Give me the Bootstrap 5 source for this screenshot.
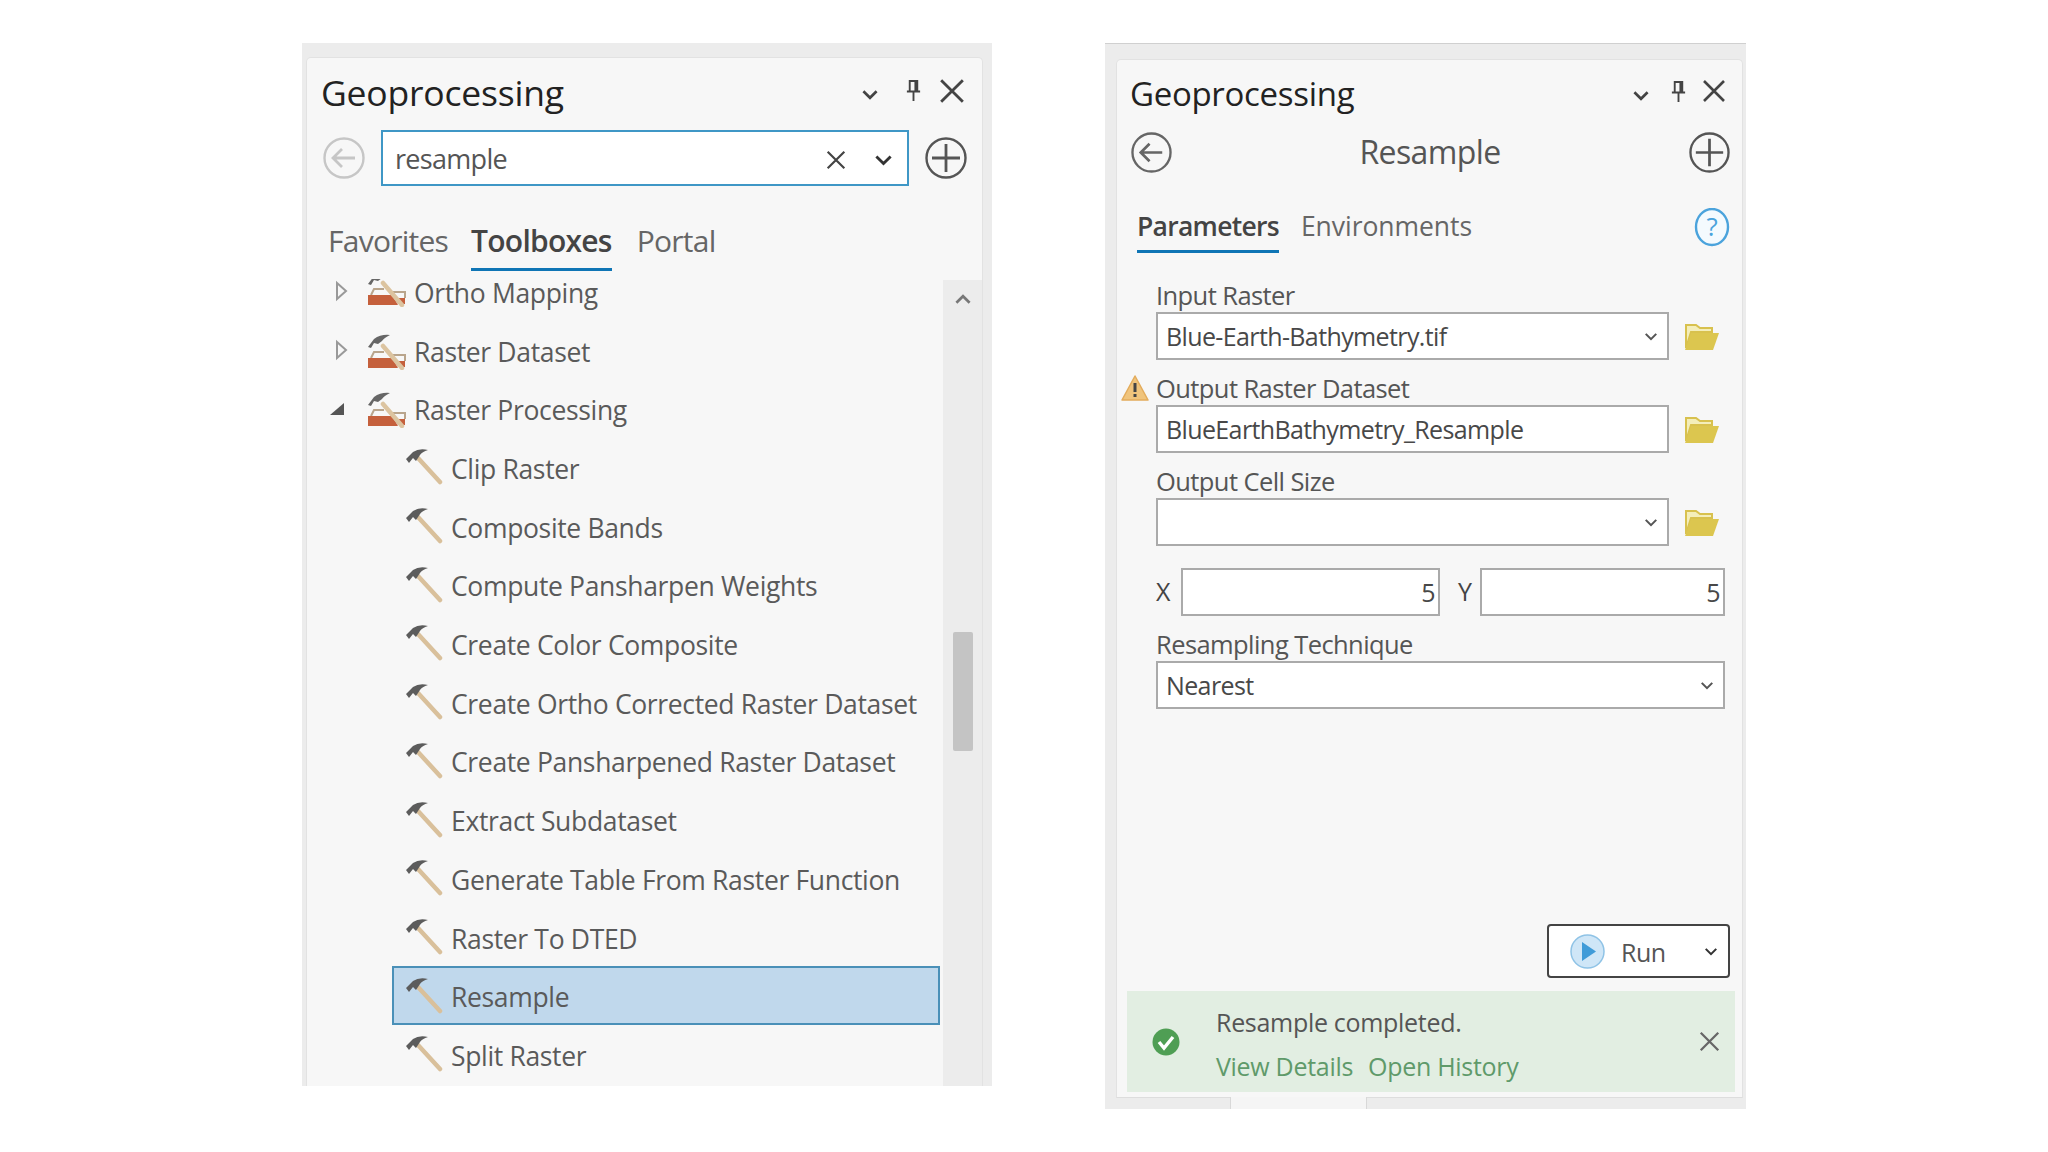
<!DOCTYPE html>
<html lang="en"><head><meta charset="utf-8"><title>Geoprocessing</title>
<link href="https://cdn.jsdelivr.net/npm/bootstrap@5.3.0/dist/css/bootstrap.min.css" rel="stylesheet">
<style>
body{background:#fff;font-family:"Open Sans","Noto Sans",sans-serif;color:#555;overflow:hidden}
.stage{padding:43px 0 0 302px;gap:113px;height:1152px}
.shell-a{width:690px;height:1043px;background:#ececec;padding:14px 9px 0 4px;overflow:hidden}
.shell-b{width:641px;height:1066px;background:#ececec;padding:15px 3px 11px 11px;position:relative;border-top:1px solid #d0d0d0}
.pane{background:#f7f7f7;height:100%;border:1px solid #e2e2e2;border-bottom:0;border-radius:5px 5px 0 0;overflow:hidden}
.pane-b{border-bottom:1px solid #ddd}
.notch{position:absolute;left:125px;bottom:0;width:137px;height:12px;background:#f5f5f5;border:1px solid #d8d8d8;border-width:0 1px}
.head-a{height:72px;padding:0 17px 3px 14px}
.head-b{height:66px;padding:0 16px 0 13px}
.ptitle{font-size:35.5px;color:#222;letter-spacing:-.2px;line-height:1}
.ptitle-b{font-size:33px;letter-spacing:-.3px}
.ptitle-c{font-size:32px;color:#555;letter-spacing:-.6px;margin-left:-1px}
.headtools{color:#444;gap:15px;margin-top:-4px}
.head-a .headtools{gap:17px}
.head-a .chevtool{margin-right:9px}
.head-b .chevtool{margin-right:5px}
.navrow{height:52px;padding:0 12px 0 14px}
.searchrow{height:56px;padding:0 13px 0 16px;gap:16px}
.searchbox{width:528px;height:56px;border:2px solid #3f97c6;background:#fff;padding:3px 10px 0 12px;font-size:27px;letter-spacing:-.7px;color:#555}
.clearx{margin-right:28px}
.tabs-a{height:55px;margin-top:30px;padding-left:21px;gap:23px}
.tabs-a .tabx:last-child{margin-left:2px}
.tabs-b{height:75px;padding:0 11px 0 20px;gap:22px}
.tabx{font-size:30px;letter-spacing:-.75px;color:#666;height:100%;display:flex;align-items:center;padding-bottom:6px}
.tabs-b .tabx{font-size:26.5px;padding-top:23px;padding-bottom:0;letter-spacing:-.05px}
.tabx.on{font-weight:600;color:#444;box-shadow:inset 0 -3px 0 #0f75b5}
.tabs-b .tabx.on{letter-spacing:-.72px}
.treebody{height:816px}
.tree{margin-top:-9px;min-width:0}
.trow{height:58.7px;font-size:26.5px;letter-spacing:-.34px;color:#5a5a5a;white-space:nowrap;flex:none;padding-top:5px}
.trow svg{margin-top:-5px}
.grp{padding-left:26px}
.exp{width:18px;flex:none;overflow:visible}
.trow .gico{margin:-2px 8px 0 17px;flex:none}
.tool{margin:0 3px 0 85px;padding-left:11px;gap:8px;border:2px solid transparent}
.tool.sel{background:#c0d8ec;border-color:#4a90b8}
.vbar{width:39px;margin-top:9px;background:#ececec;padding-top:14px;flex:none}
.thumb{width:20px;height:119px;background:#c4c4c4;border-radius:2px;margin:327px 0 0 10px}
.formcol{padding:0 17px 0 39px;margin-top:25px}
.lab{font-size:25.5px;letter-spacing:-.58px;color:#555;height:34px;line-height:34px;white-space:nowrap}
.gaptop{margin-top:11px}
.fieldbox{height:48px;border:2px solid #aaa;border-radius:0;background:#fff;font-size:25px;letter-spacing:-.62px;color:#484848;padding:0 9px 0 8px;white-space:nowrap;box-shadow:none;min-height:0;line-height:1}
.w-narrow{width:513px}
.folder{margin-left:15px;flex:none}
.warn{margin-left:-35px;margin-right:7px;flex:none}
.xy{font-size:25px;color:#444;gap:0;margin-top:22px}
.xlab{width:25px}.ylab{width:40px;padding-left:18px}
.numbox{padding-right:3px}
.numx{width:259px}
.runwrap{margin-right:-5px}
.runbtn{width:183px;height:54px;border:2px solid #444;border-radius:4px;background:#fff;padding:0 10px 0 21px;font-size:25px;letter-spacing:-.5px;color:#555}
.banner{height:101px;margin:13px 7px 5px 10px;background:#e2eee2;padding:0 15px 0 25px;font-size:25px;letter-spacing:-.3px}
.banner a{color:#5f9a6a;text-decoration:none}
.links{gap:15px;margin-top:11px}
.msg{margin-left:36px;line-height:33px;color:#555;padding-top:5px}
.helpico{margin-top:30px}
</style></head>
<body class="m-0">
<svg width="0" height="0" class="position-absolute">
<defs>
<symbol id="hammer" viewBox="0 0 38 36"><path d="M13 9 L35 33" stroke="#d9c09b" stroke-width="4.5" stroke-linecap="round"/><path d="M1 10 L8 3 Q14 -1 23 1 Q17 3 15 6 L11 12 L8 9 L4 14 Z" fill="#5c5c5c"/></symbol>
<symbol id="tbox" viewBox="0 0 38 36"><path d="M0 13 L6 5 Q13 0 22 1 Q16 4 14 7 L10 10 L6 9 L3 14 Z" fill="#666"/><path d="M3 24 L6 18 H16" fill="none" stroke="#b9a58c" stroke-width="2"/><path d="M0 24 H24 L30 34 H0 Z" fill="#c5603c"/><path d="M24 21 H37 V27" fill="none" stroke="#b9a58c" stroke-width="2"/><path d="M26 27 H37 V33 H30 Z" fill="#c5603c"/><path d="M15 12 L34 34" stroke="#dcc4a0" stroke-width="4.5" stroke-linecap="round"/></symbol>
<symbol id="folder" viewBox="0 0 36 36"><path d="M2 30 V7 H12 L16 10 H28 V14 H7 L2 30" fill="#f4eeba" stroke="#d8c14e" stroke-width="2"/><path d="M1 32 L7 15 H35 L29 32 Z" fill="#dcc64f"/></symbol>
<symbol id="circback" viewBox="0 0 42 42"><circle cx="21" cy="21" r="19.5" fill="none" stroke="currentColor" stroke-width="2.4"/><path d="M32 21 H11 M19 12 L10 21 L19 30" fill="none" stroke="currentColor" stroke-width="2.8"/></symbol>
<symbol id="circplus" viewBox="0 0 42 42"><circle cx="21" cy="21" r="19.5" fill="none" stroke="currentColor" stroke-width="2.4"/><path d="M21 7 V35 M7 21 H35" stroke="currentColor" stroke-width="2.8"/></symbol>
<symbol id="chev" viewBox="0 0 16 10"><path d="M2 2 L8 8 L14 2" fill="none" stroke="currentColor" stroke-width="2.4"/></symbol>
<symbol id="pin" viewBox="0 0 18 24"><path d="M5 2 H13 V13 H5 Z M2 13 H16 M9 13 V23 M11 3 V12" fill="none" stroke="#444" stroke-width="2"/></symbol>
<symbol id="cross" viewBox="0 0 24 24"><path d="M2 2 L22 22 M22 2 L2 22" fill="none" stroke="currentColor" stroke-width="2.6"/></symbol>
</defs></svg>
<main class="d-flex align-items-start stage">
<section class="shell-a flex-none">
<div class="pane">
<div class="d-flex align-items-center justify-content-between head-a">
<div class="ptitle">Geoprocessing</div>
<div class="d-flex align-items-center headtools"><svg width="18" height="11" class="chevtool mt-2"><use href="#chev"/></svg><svg width="17" height="23"><use href="#pin"/></svg><svg width="26" height="26"><use href="#cross"/></svg></div>
</div>
<div class="d-flex align-items-center searchrow">
<svg width="42" height="42" class="flex-shrink-0" style="color:#c6c6c6"><use href="#circback"/></svg>
<div class="d-flex align-items-center searchbox flex-shrink-0"><span class="flex-grow-1">resample</span><svg width="20" height="20" class="clearx" style="color:#444"><use href="#cross"/></svg><svg width="19" height="12" class="me-1" style="color:#333"><use href="#chev"/></svg></div>
<svg width="42" height="42" class="flex-shrink-0" style="color:#555"><use href="#circplus"/></svg>
</div>
<div class="d-flex tabs-a"><div class="tabx">Favorites</div><div class="tabx on">Toolboxes</div><div class="tabx">Portal</div></div>
<div class="d-flex treebody">
<div class="tree flex-grow-1 d-flex flex-column">
<div class="d-flex align-items-center trow grp"><svg width="18" height="22" class="exp"><path d="M4 3 L13 11 L4 19 Z" fill="none" stroke="#999" stroke-width="2"/></svg><svg width="38" height="28" viewBox="0 8 38 28" class="gico"><use href="#tbox" width="38" height="36"/></svg><span>Ortho Mapping</span></div>
<div class="d-flex align-items-center trow grp"><svg width="18" height="22" class="exp"><path d="M4 3 L13 11 L4 19 Z" fill="none" stroke="#999" stroke-width="2"/></svg><svg width="38" height="36" class="gico"><use href="#tbox"/></svg><span>Raster Dataset</span></div>
<div class="d-flex align-items-center trow grp"><svg width="18" height="22" class="exp"><path d="M-3 17 H11 V5 Z" fill="#555"/></svg><svg width="38" height="36" class="gico"><use href="#tbox"/></svg><span>Raster Processing</span></div>
<div class="d-flex align-items-center trow tool"><svg width="38" height="36"><use href="#hammer"/></svg><span>Clip Raster</span></div>
<div class="d-flex align-items-center trow tool"><svg width="38" height="36"><use href="#hammer"/></svg><span>Composite Bands</span></div>
<div class="d-flex align-items-center trow tool"><svg width="38" height="36"><use href="#hammer"/></svg><span>Compute Pansharpen Weights</span></div>
<div class="d-flex align-items-center trow tool"><svg width="38" height="36"><use href="#hammer"/></svg><span>Create Color Composite</span></div>
<div class="d-flex align-items-center trow tool"><svg width="38" height="36"><use href="#hammer"/></svg><span>Create Ortho Corrected Raster Dataset</span></div>
<div class="d-flex align-items-center trow tool"><svg width="38" height="36"><use href="#hammer"/></svg><span>Create Pansharpened Raster Dataset</span></div>
<div class="d-flex align-items-center trow tool"><svg width="38" height="36"><use href="#hammer"/></svg><span>Extract Subdataset</span></div>
<div class="d-flex align-items-center trow tool"><svg width="38" height="36"><use href="#hammer"/></svg><span>Generate Table From Raster Function</span></div>
<div class="d-flex align-items-center trow tool"><svg width="38" height="36"><use href="#hammer"/></svg><span>Raster To DTED</span></div>
<div class="d-flex align-items-center trow tool sel"><svg width="38" height="36"><use href="#hammer"/></svg><span>Resample</span></div>
<div class="d-flex align-items-center trow tool"><svg width="38" height="36"><use href="#hammer"/></svg><span>Split Raster</span></div>
</div>
<div class="vbar"><svg width="18" height="11" class="d-block mx-auto" style="color:#777"><use href="#chev" transform="matrix(1 0 0 -1 0 11)"/></svg><div class="thumb"></div></div>
</div>
</div>
</section>
<section class="shell-b flex-none">
<div class="pane pane-b d-flex flex-column">
<div class="d-flex align-items-center justify-content-between head-b">
<div class="ptitle ptitle-b">Geoprocessing</div>
<div class="d-flex align-items-center headtools"><svg width="18" height="11" class="chevtool mt-2"><use href="#chev"/></svg><svg width="17" height="23"><use href="#pin"/></svg><svg width="24" height="24"><use href="#cross"/></svg></div>
</div>
<div class="d-flex align-items-center justify-content-between navrow">
<svg width="41" height="41" style="color:#666"><use href="#circback"/></svg>
<div class="ptitle ptitle-c">Resample</div>
<svg width="41" height="41" style="color:#555"><use href="#circplus"/></svg>
</div>
<div class="d-flex align-items-stretch tabs-b">
<div class="tabx on">Parameters</div><div class="tabx">Environments</div>
<svg width="38" height="40" viewBox="0 0 38 40" class="ms-auto helpico"><ellipse cx="19" cy="19" rx="16" ry="18" fill="#f4fafe" stroke="#4ba3dc" stroke-width="2.4"/><text x="19" y="28" text-anchor="middle" font-size="26" font-family="Open Sans" fill="#4ba3dc">?</text></svg>
</div>
<div class="formcol d-flex flex-column flex-grow-1">
<div class="lab">Input Raster</div>
<div class="d-flex align-items-center"><div class="form-control d-flex align-items-center justify-content-between fieldbox w-narrow"><span>Blue-Earth-Bathymetry.tif</span><svg width="14" height="9" style="color:#555"><use href="#chev"/></svg></div><svg width="36" height="36" class="folder"><use href="#folder"/></svg></div>
<div class="lab gaptop d-flex align-items-center"><svg width="28" height="28" viewBox="0 0 28 28" class="warn"><path d="M14 2 L27 26 H1 Z" fill="#f0c47c" stroke="#e3ac5c" stroke-width="1.5" stroke-linejoin="round"/><path d="M14 9 V18 M14 20 V23" stroke="#444" stroke-width="3"/></svg><span>Output Raster Dataset</span></div>
<div class="d-flex align-items-center"><div class="form-control d-flex align-items-center fieldbox w-narrow"><span>BlueEarthBathymetry_Resample</span></div><svg width="36" height="36" class="folder"><use href="#folder"/></svg></div>
<div class="lab gaptop">Output Cell Size</div>
<div class="d-flex align-items-center"><div class="form-control d-flex align-items-center justify-content-end fieldbox w-narrow"><svg width="14" height="9" style="color:#555"><use href="#chev"/></svg></div><svg width="36" height="36" class="folder"><use href="#folder"/></svg></div>
<div class="d-flex align-items-center xy"><span class="xlab">X</span><div class="form-control d-flex align-items-center justify-content-end fieldbox numbox numx">5</div><span class="ylab">Y</span><div class="form-control d-flex align-items-center justify-content-end fieldbox numbox flex-grow-1 w-auto">5</div></div>
<div class="lab gaptop">Resampling Technique</div>
<div class="form-control d-flex align-items-center justify-content-between fieldbox"><span>Nearest</span><svg width="14" height="9" style="color:#555"><use href="#chev"/></svg></div>
<div class="d-flex justify-content-end mt-auto runwrap"><div class="d-flex align-items-center runbtn"><svg width="35" height="35" viewBox="0 0 35 35"><circle cx="17.5" cy="17.5" r="16.5" fill="#cfe6f7" stroke="#8fc3e6" stroke-width="1.5"/><path d="M12 8 L26 17.5 L12 27 Z" fill="#3f9bd8"/></svg><span class="ms-3 pt-1">Run</span><svg width="14" height="9" class="ms-auto" style="color:#333"><use href="#chev"/></svg></div></div>
</div>
<div class="d-flex align-items-center banner">
<svg width="28" height="28" viewBox="0 0 28 28" class="flex-shrink-0"><circle cx="14" cy="14" r="13.5" fill="#4f9e54"/><path d="M7 14 L12 20 L21 9" fill="none" stroke="#fff" stroke-width="3.4"/></svg>
<div class="msg flex-grow-1"><div>Resample completed.</div><div class="d-flex links"><a href="#">View Details</a><a href="#">Open History</a></div></div>
<svg width="21" height="21" class="flex-shrink-0" style="color:#666"><use href="#cross"/></svg>
</div>
</div>
<div class="notch"></div>
</section>
</main>
<script src="https://cdn.jsdelivr.net/npm/bootstrap@5.3.0/dist/js/bootstrap.bundle.min.js"></script>
</body></html>
